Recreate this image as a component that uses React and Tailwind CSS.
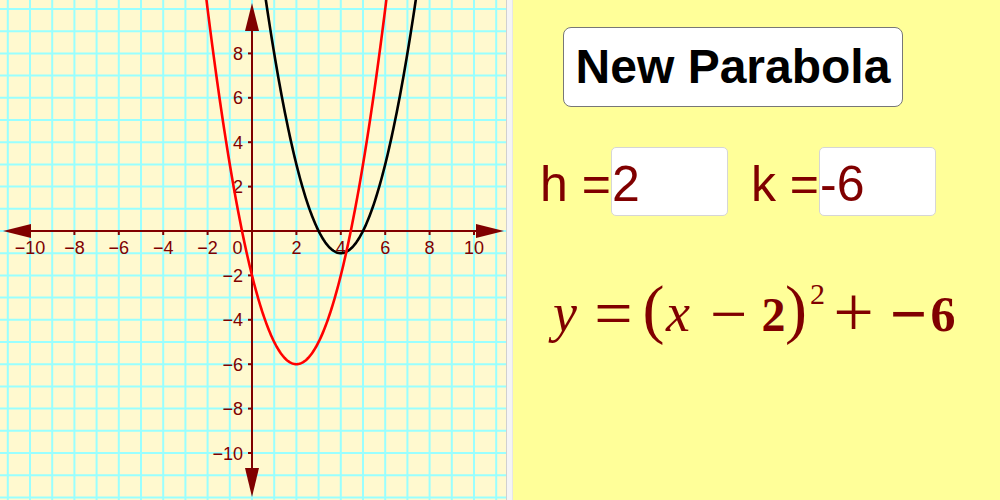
import React from "react";

const ox = 252;
const oy = 231;
const u = 22.2;
const px = (x) => ox + x * u;
const py = (y) => oy - y * u;

function curve(f, a, b) {
  const pts = [];
  const n = 200;
  for (let i = 0; i <= n; i++) {
    const x = a + ((b - a) * i) / n;
    pts.push(`${px(x).toFixed(2)},${py(f(x)).toFixed(2)}`);
  }
  return "M" + pts.join(" L");
}

function Graph() {
  const grid = [];
  for (let k = -11; k <= 11; k++) {
    grid.push(
      <line key={"v" + k} x1={px(k)} y1={0} x2={px(k)} y2={500} stroke="#99ffff" strokeWidth="2" />
    );
  }
  for (let k = -12; k <= 10; k++) {
    grid.push(
      <line key={"h" + k} x1={0} y1={py(k)} x2={506} y2={py(k)} stroke="#99ffff" strokeWidth="2" />
    );
  }
  const xs = [-10, -8, -6, -4, -2, 2, 4, 6, 8, 10];
  const ys = [8, 6, 4, 2, -2, -4, -6, -8, -10];
  const lab = (v) => (v < 0 ? "\u2212" + Math.abs(v) : String(v));
  const axis = "#800000";
  return (
    <svg width="506" height="500" viewBox="0 0 506 500" className="block">
      <rect x="0" y="0" width="506" height="500" fill="#fff9cf" />
      {grid}
      <line x1={30} y1={oy} x2={477} y2={oy} stroke={axis} strokeWidth="2" />
      <line x1={ox} y1={30} x2={ox} y2={469} stroke={axis} strokeWidth="2" />
      <polygon points={`3,${oy} 31,${oy - 7} 31,${oy + 7}`} fill={axis} />
      <polygon points={`504,${oy} 476,${oy - 7} 476,${oy + 7}`} fill={axis} />
      <polygon points={`${ox},3 ${ox - 7},31 ${ox + 7},31`} fill={axis} />
      <polygon points={`${ox},497 ${ox - 7},468 ${ox + 7},468`} fill={axis} />
      {xs.map((v) => (
        <line key={"tx" + v} x1={px(v)} y1={oy} x2={px(v)} y2={oy + 4} stroke={axis} strokeWidth="2" />
      ))}
      {ys.map((v) => (
        <line key={"ty" + v} x1={ox - 4} y1={py(v)} x2={ox} y2={py(v)} stroke={axis} strokeWidth="2" />
      ))}
      <g fill={axis} fontFamily="'Liberation Sans', Arial, sans-serif" fontSize="18">
        {xs.map((v) => (
          <text key={"lx" + v} x={px(v)} y={253.5} textAnchor="middle">
            {lab(v)}
          </text>
        ))}
        <text x={237.5} y={253.5} textAnchor="middle">0</text>
        {ys.map((v) => (
          <text key={"ly" + v} x={243} y={py(v) + 6.5} textAnchor="end">
            {lab(v)}
          </text>
        ))}
      </g>
      <path d={curve((x) => (x - 4) * (x - 4) - 1, 0.3, 7.7)} fill="none" stroke="#000" strokeWidth="2.6" />
      <path d={curve((x) => (x - 2) * (x - 2) - 6, -2.4, 6.4)} fill="none" stroke="#ff0000" strokeWidth="2.6" />
    </svg>
  );
}

function Box({ w, children, className = "" }) {
  return (
    <div className={"flex justify-center shrink-0 " + className} style={{ width: w }}>
      {children}
    </div>
  );
}

function Formula() {
  const op = "font-['Liberation_Serif',serif] leading-none translate-y-[5px] whitespace-nowrap";
  return (
    <div className="ml-[5px] mt-[55px] flex items-baseline text-[#800000] font-['Liberation_Serif',serif]">
      <Box w={40}><span className="italic text-[54px] leading-none">y</span></Box>
      <Box w={57}><span className={op + " text-[68px]"}>=</span></Box>
      <Box w={23}><span className="text-[66px] leading-none">(</span></Box>
      <Box w={26}><span className="italic text-[54px] leading-none">x</span></Box>
      <Box w={75}><span className={op + " text-[66px]"}>{"\u2212"}</span></Box>
      <Box w={15}><span className="font-bold text-[48px] leading-none">2</span></Box>
      <Box w={30}><span className="text-[66px] leading-none">)</span></Box>
      <Box w={13}><span className="text-[30px] leading-none -translate-y-[27px]">2</span></Box>
      <Box w={59}><span className={op + " text-[72px]"}>+</span></Box>
      <Box w={51}><span className={op + " text-[66px] font-bold"}>{"\u2212"}</span></Box>
      <Box w={18}><span className="font-bold text-[50px] leading-none">6</span></Box>
    </div>
  );
}

export default function App() {
  return (
    <div className="w-[1000px] h-[500px] flex overflow-hidden font-['Liberation_Sans',Arial,sans-serif]">
      <div className="w-[506px] h-[500px] shrink-0">
        <Graph />
      </div>
      <div className="w-[7px] h-[500px] shrink-0 bg-[#f5f5f5] border-l border-[#d0d0d0] border-r border-r-[#e6e6e6]" />
      <div className="flex-1 h-[500px] bg-[#ffff99] flex flex-col pl-[27px] pt-[27px]">
        <button className="ml-[23px] w-[340px] h-[80px] bg-white border border-[#777777] rounded-[8px] text-[48px] font-bold text-black leading-none font-['Liberation_Sans',Arial,sans-serif]">
          New Parabola
        </button>
        <div className="mt-[40px] flex items-start text-[50px] text-[#800000]">
          <span className="h-[69px] leading-[74px] whitespace-pre">h =</span>
          <div className="w-[117px] h-[69px] bg-white border border-[#d6d6d6] rounded-[5px] leading-[72px]">2</div>
          <span className="ml-[23px] h-[69px] leading-[74px] whitespace-pre">k =</span>
          <div className="w-[117px] h-[69px] bg-white border border-[#d6d6d6] rounded-[5px] leading-[72px]">-6</div>
        </div>
        <Formula />
      </div>
    </div>
  );
}
